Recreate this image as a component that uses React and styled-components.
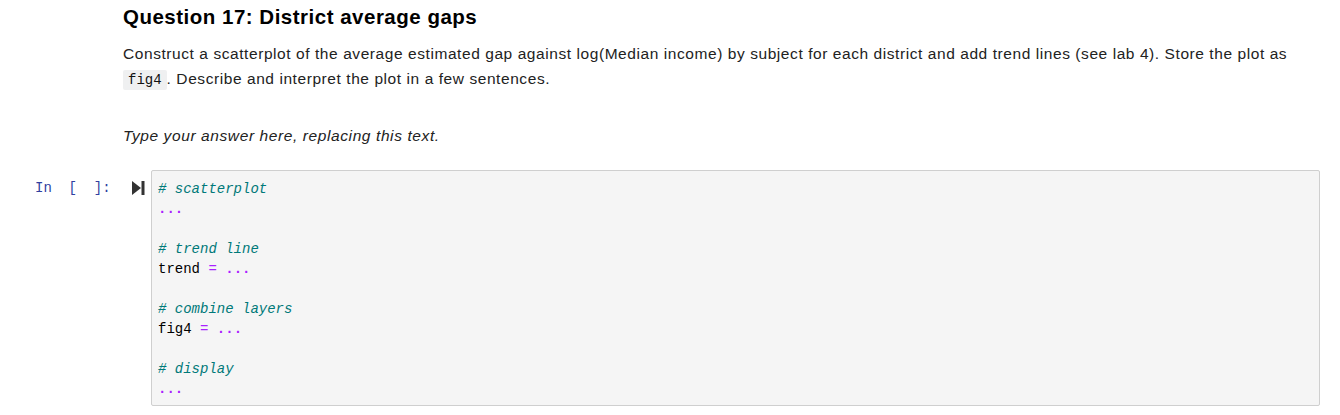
import React from "react";
import styled, { createGlobalStyle } from "styled-components";

const Global = createGlobalStyle`
  body {
    margin: 0;
    background: #fff;
    font-family: "Liberation Sans", Arial, sans-serif;
    color: #000;
  }
`;

const Notebook = styled.div`
  width: 1340px;
  height: 415px;
  overflow: hidden;
  box-sizing: border-box;
  padding: 0 20px 0 0;
`;

const MarkdownCell = styled.div`
  padding-left: 123px;
  width: 1185px;
`;

const Heading = styled.h2`
  margin: 5px 0 0;
  font-size: 20.5px;
  letter-spacing: 0.5px;
  line-height: 24px;
  font-weight: bold;
  color: #000;
`;

const Para = styled.p`
  margin: ${(p) => p.$top || 0}px 0 0;
  font-size: 15.5px;
  letter-spacing: ${(p) => (p.$italic ? "0.6px" : "0.57px")};
  line-height: 25px;
  font-style: ${(p) => (p.$italic ? "italic" : "normal")};
  color: #222;
`;

const InlineCode = styled.code`
  font-family: "Liberation Mono", "DejaVu Sans Mono", monospace;
  font-size: 14px;
  letter-spacing: 0;
  background: #eff0f1;
  padding: 2px 5px;
  border-radius: 2px;
  color: #111;
`;

const CodeCell = styled.div`
  display: flex;
  align-items: flex-start;
  margin-top: 22px;
`;

const Prompt = styled.div`
  width: 117px;
  box-sizing: border-box;
  padding: 8px 0 0 35px;
  font-family: "Liberation Mono", "DejaVu Sans Mono", monospace;
  font-size: 14px;
  line-height: 20px;
  color: #303f9f;
  white-space: pre;
  flex: none;
`;

const RunIcon = styled.svg`
  margin: 11px 6px 0 15px;
  flex: none;
`;

const Editor = styled.pre`
  flex: 1;
  margin: 0;
  background: #f5f5f5;
  border: 1px solid #cfcfcf;
  border-radius: 2px;
  padding: 8px 6px 6px 6px;
  font-family: "Liberation Mono", "DejaVu Sans Mono", monospace;
  font-size: 14px;
  line-height: 20px;
  color: #000;
  height: 236px;
  box-sizing: border-box;
`;

const Comment = styled.span`
  color: #007979;
  font-style: italic;
`;

const Op = styled.span`
  color: #aa22ff;
  font-weight: ${(p) => (p.$bold ? "bold" : "normal")};
`;

export default function App() {
  return (
    <Notebook>
      <Global />
      <MarkdownCell>
        <Heading>Question 17: District average gaps</Heading>
        <Para $top={12}>
          Construct a scatterplot of the average estimated gap against log(Median income) by subject for each
          district and add trend lines (see lab 4). Store the plot as <InlineCode>fig4</InlineCode>. Describe and
          interpret the plot in a few sentences.
        </Para>
        <Para $top={30} $italic>
          Type your answer here, replacing this text.
        </Para>
      </MarkdownCell>
      <CodeCell>
        <Prompt>{"In  [  ]:"}</Prompt>
        <RunIcon width="13" height="14" viewBox="0 0 13 14">
          <path d="M0 0 L9 7 L0 14 Z" fill="#333" />
          <rect x="9.5" y="0" width="3" height="14" fill="#333" />
        </RunIcon>
        <Editor>
          <Comment># scatterplot</Comment>
          {"\n"}
          <Op $bold>...</Op>
          {"\n\n"}
          <Comment># trend line</Comment>
          {"\ntrend "}
          <Op>=</Op> <Op $bold>...</Op>
          {"\n\n"}
          <Comment># combine layers</Comment>
          {"\nfig4 "}
          <Op>=</Op> <Op $bold>...</Op>
          {"\n\n"}
          <Comment># display</Comment>
          {"\n"}
          <Op $bold>...</Op>
        </Editor>
      </CodeCell>
    </Notebook>
  );
}
